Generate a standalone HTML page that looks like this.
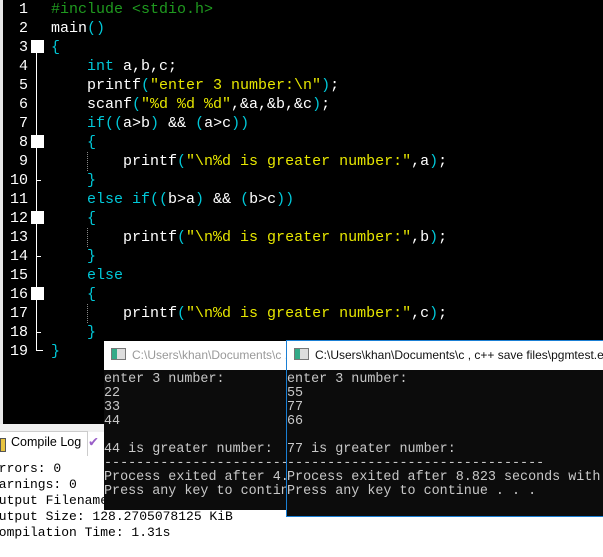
<!DOCTYPE html>
<html><head><meta charset="utf-8"><style>
*{margin:0;padding:0}
body{width:603px;height:557px;background:#fff;position:relative;overflow:hidden;font-family:"Liberation Mono",monospace}
#ed{position:absolute;left:3px;top:0;width:600px;height:424px;background:#000}
#lstrip{position:absolute;left:0;top:0;width:3px;height:424px;background:#e8e8e8}
.ln{position:absolute;left:0;width:25px;text-align:right;color:#fff;font-size:15px;line-height:19px}
.cl{position:absolute;left:48px;white-space:pre;font-size:15px;line-height:19px;color:#fff}
.g{color:#1f9a1f}.c{color:#00c8d8}.y{color:#e6e600}.w{color:#fff}
.sq{position:absolute;left:28px;width:13px;height:13px;background:#fff}
.con{position:absolute;background:#0c0c0c;color:#c8c8c8;font-size:13.4px;line-height:14px;white-space:pre;overflow:hidden;box-sizing:border-box;padding-top:3px}
.tb{position:absolute;background:#fff;font-family:"Liberation Sans",sans-serif;font-size:12px;color:#999;white-space:pre;overflow:hidden;line-height:28px}
.log{position:absolute;left:-9px;font-family:"Liberation Mono",monospace;font-size:13px;color:#000;white-space:pre;line-height:16px}
</style></head><body>
<div id="lstrip"></div>
<div id="ed">
<div style="position:absolute;left:33px;top:50px;width:1px;height:300px;background:#fff"></div>
<div style="position:absolute;left:33px;top:350px;width:7px;height:1px;background:#fff"></div>
<div style="position:absolute;left:33px;top:180px;width:5px;height:1px;background:#fff"></div>
<div style="position:absolute;left:33px;top:256px;width:5px;height:1px;background:#fff"></div>
<div style="position:absolute;left:33px;top:332px;width:5px;height:1px;background:#fff"></div>
<div style="position:absolute;left:84px;top:152px;border-left:1px dotted #888;height:19px"></div>
<div style="position:absolute;left:84px;top:228px;border-left:1px dotted #888;height:19px"></div>
<div style="position:absolute;left:84px;top:304px;border-left:1px dotted #888;height:19px"></div>
<div class="sq" style="top:40px"></div>
<div class="sq" style="top:135px"></div>
<div class="sq" style="top:211px"></div>
<div class="sq" style="top:287px"></div>
<div class="ln" style="top:0">1</div><div class="ln" style="top:19px">2</div><div class="ln" style="top:38px">3</div><div class="ln" style="top:57px">4</div><div class="ln" style="top:76px">5</div><div class="ln" style="top:95px">6</div><div class="ln" style="top:114px">7</div><div class="ln" style="top:133px">8</div><div class="ln" style="top:152px">9</div><div class="ln" style="top:171px">10</div><div class="ln" style="top:190px">11</div><div class="ln" style="top:209px">12</div><div class="ln" style="top:228px">13</div><div class="ln" style="top:247px">14</div><div class="ln" style="top:266px">15</div><div class="ln" style="top:285px">16</div><div class="ln" style="top:304px">17</div><div class="ln" style="top:323px">18</div><div class="ln" style="top:342px">19</div>
<div class="cl" style="top:0"><span class="g">#include &lt;stdio.h&gt;</span></div>
<div class="cl" style="top:19px">main<span class="c">()</span></div>
<div class="cl" style="top:38px"><span class="c">{</span></div>
<div class="cl" style="top:57px">    <span class="c">int</span> a,b,c;</div>
<div class="cl" style="top:76px">    printf<span class="c">(</span><span class="y">"enter 3 number:\n"</span><span class="c">)</span>;</div>
<div class="cl" style="top:95px">    scanf<span class="c">(</span><span class="y">"%d %d %d"</span>,&amp;a,&amp;b,&amp;c<span class="c">)</span>;</div>
<div class="cl" style="top:114px">    <span class="c">if((</span>a&gt;b<span class="c">)</span> &amp;&amp; <span class="c">(</span>a&gt;c<span class="c">))</span></div>
<div class="cl" style="top:133px">    <span class="c">{</span></div>
<div class="cl" style="top:152px">        printf<span class="c">(</span><span class="y">"\n%d is greater number:"</span>,a<span class="c">)</span>;</div>
<div class="cl" style="top:171px">    <span class="c">}</span></div>
<div class="cl" style="top:190px">    <span class="c">else if((</span>b&gt;a<span class="c">)</span> &amp;&amp; <span class="c">(</span>b&gt;c<span class="c">))</span></div>
<div class="cl" style="top:209px">    <span class="c">{</span></div>
<div class="cl" style="top:228px">        printf<span class="c">(</span><span class="y">"\n%d is greater number:"</span>,b<span class="c">)</span>;</div>
<div class="cl" style="top:247px">    <span class="c">}</span></div>
<div class="cl" style="top:266px">    <span class="c">else</span></div>
<div class="cl" style="top:285px">    <span class="c">{</span></div>
<div class="cl" style="top:304px">        printf<span class="c">(</span><span class="y">"\n%d is greater number:"</span>,c<span class="c">)</span>;</div>
<div class="cl" style="top:323px">    <span class="c">}</span></div>
<div class="cl" style="top:342px"><span class="c">}</span></div>
</div>
<div style="position:absolute;left:0;top:424px;width:110px;height:8px;background:#f0f0f0"></div>
<div style="position:absolute;left:-1px;top:431px;width:87px;height:24px;background:#fff;border:1px solid #ccc;border-bottom:none"></div>
<div style="position:absolute;left:0;top:438px;width:4px;height:12px;background:#e8c440;border:1px solid #555"></div>
<div style="position:absolute;left:11px;top:435px;font-family:'Liberation Sans',sans-serif;font-size:12.5px;color:#000">Compile Log</div>
<div style="position:absolute;left:89px;top:432px;font-size:15px;color:#9a5fc8">✔</div>
<div class="log" style="top:461px">Errors: 0
Warnings: 0
Output Filename
Output Size: 128.2705078125 KiB
Compilation Time: 1.31s</div>
<div class="tb" style="left:104px;top:341px;width:186px;height:29px"><span style="display:inline-block;width:13px;height:10px;border:1px solid #777;margin:0 6px 0 7px;vertical-align:-1px;background:linear-gradient(90deg,#3a8 0 40%,#ddd 40%)"></span>C:\Users\khan\Documents\c , c++</div>
<div class="con" style="left:104px;top:370px;width:184px;height:140px">enter 3 number:
22
33
44

44 is greater number:
--------------------------------
Process exited after 4.
Press any key to continue</div>
<div style="position:absolute;left:286px;top:340px;width:317px;height:177px;background:#1a7fd4"></div>
<div class="tb" style="left:287px;top:341px;width:316px;height:29px;color:#111"><span style="display:inline-block;width:13px;height:10px;border:1px solid #777;margin:0 6px 0 7px;vertical-align:-1px;background:linear-gradient(90deg,#3a8 0 40%,#ddd 40%)"></span>C:\Users\khan\Documents\c , c++ save files\pgmtest.exe</div>
<div class="con" style="left:287px;top:370px;width:316px;height:146px">enter 3 number:
55
77
66

77 is greater number:
--------------------------------
Process exited after 8.823 seconds with
Press any key to continue . . .</div>
</body></html>
